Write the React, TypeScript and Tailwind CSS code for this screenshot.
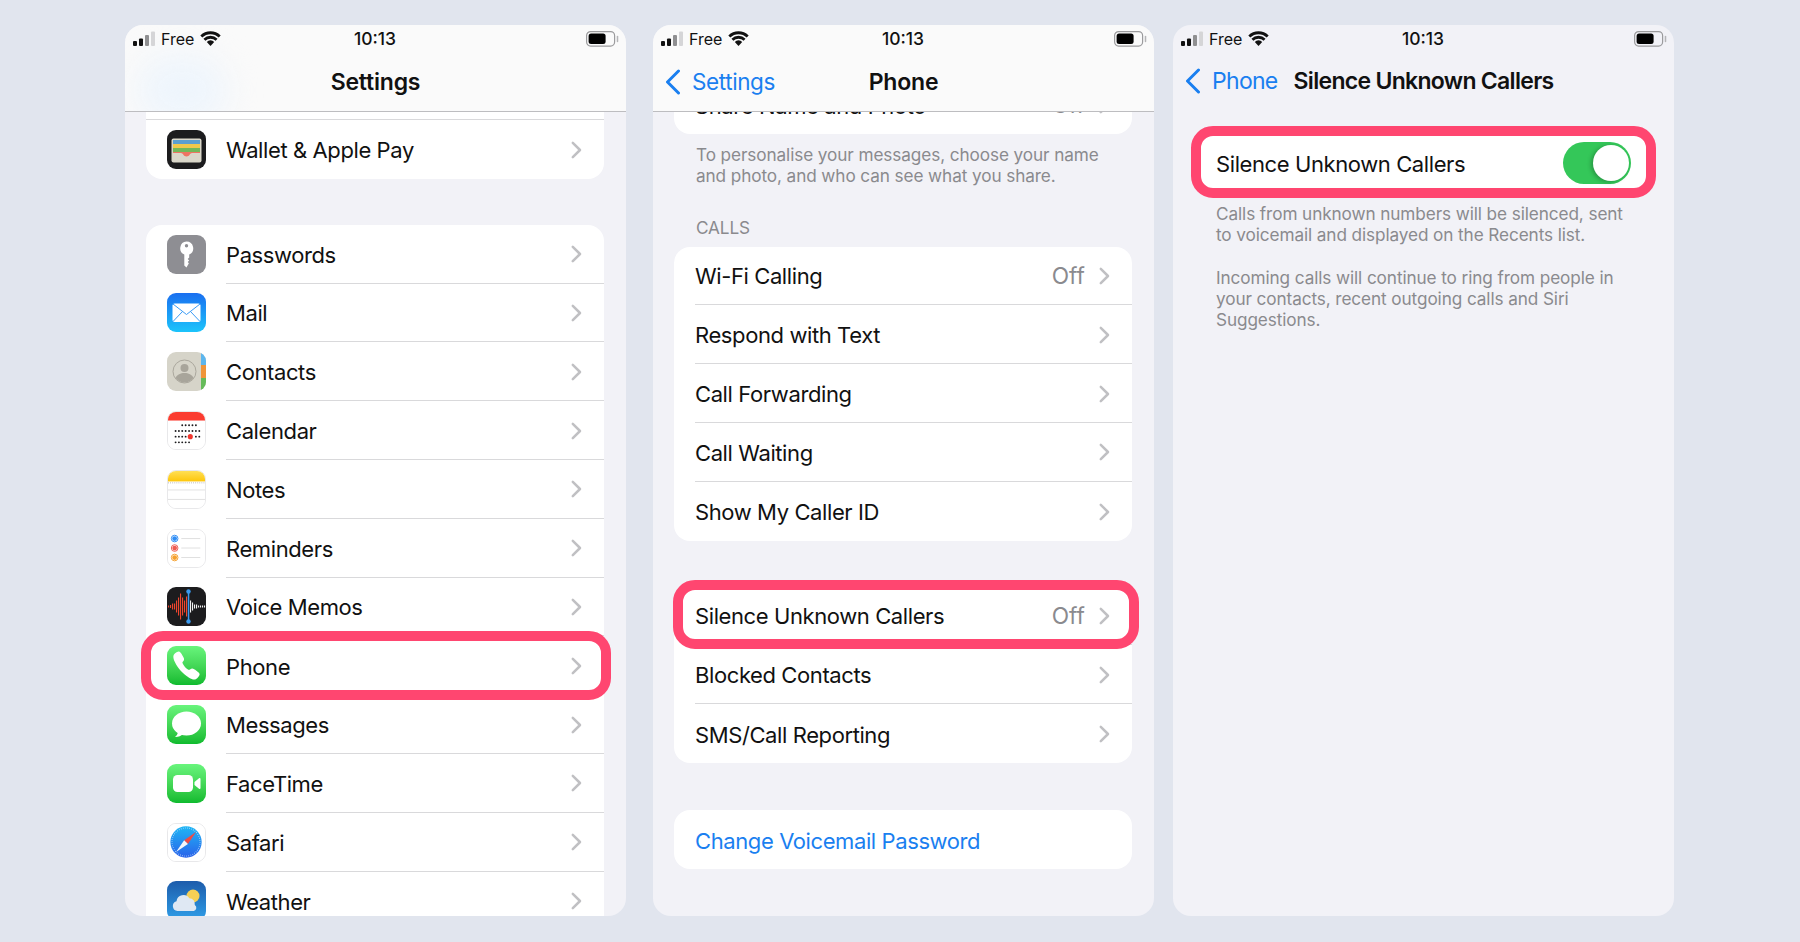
import type { ReactNode } from "react";
import { IoCall } from "react-icons/io5";

const Chevron = () => (
  <svg width="11" height="18" viewBox="0 0 11 18" className="mt-[1px] shrink-0">
    <path d="M1.8 1.8 9 9l-7.2 7.2" fill="none" stroke="#c0c0c3" strokeWidth="2.5" strokeLinecap="round" strokeLinejoin="round" />
  </svg>
);

const BackChevron = () => (
  <svg width="16" height="26" viewBox="0 0 16 26" className="shrink-0">
    <path d="M13.5 2 2.5 13l11 11" fill="none" stroke="#1a7ff0" strokeWidth="3" strokeLinecap="round" strokeLinejoin="round" />
  </svg>
);

const IconBox = ({ children, border }: { children: ReactNode; border?: boolean }) => (
  <div className={`h-[39px] w-[39px] shrink-0 overflow-hidden rounded-[9px] ${border ? "border border-[#e8e8ea]" : ""}`}>
    {children}
  </div>
);

const Svg = ({ children }: { children: ReactNode }) => (
  <svg viewBox="0 0 39 39" className="h-full w-full">{children}</svg>
);

const WalletIcon = () => (
  <IconBox>
    <Svg>
      <rect width="39" height="39" fill="#1c1c1e" />
      <rect x="4.5" y="8.5" width="30" height="24" rx="2" fill="#dad7ca" />
      <rect x="6" y="10" width="27" height="4" fill="#5b9fd0" />
      <rect x="6" y="14" width="27" height="4" fill="#f1c84b" />
      <rect x="6" y="18" width="27" height="4" fill="#72b85a" />
      <path d="M6 22h27v1h-8c-2 0-2.500 3.500-5.500 3.500S16 23 14 23H6z" fill="#ee7462" />
    </Svg>
  </IconBox>
);

const KeyIcon = () => (
  <IconBox>
    <Svg>
      <rect width="39" height="39" fill="#8e8e93" />
      <path fillRule="evenodd" fill="#fff" d="M19.500 6.500a6.800 6.800 0 0 1 2.700 13v3l-1.500 1.500 1.500 1.500-1.500 1.500 1.200 1.300-2.400 4.200-2.200-2V19.500a6.800 6.800 0 0 1 2.200-13zm0 2.600a1.700 1.700 0 1 0 0 3.400 1.700 1.700 0 0 0 0-3.400z" />
    </Svg>
  </IconBox>
);

const MailIcon = () => (
  <IconBox>
    <Svg>
      <defs>
        <linearGradient id="mailBg" x1="0" y1="0" x2="0" y2="1">
          <stop offset="0" stopColor="#1a6ff0" />
          <stop offset="1" stopColor="#1cc4fb" />
        </linearGradient>
      </defs>
      <rect width="39" height="39" fill="url(#mailBg)" />
      <rect x="5.500" y="10.500" width="28" height="18.500" rx="2" fill="#fff" />
      <path d="M6 11l13.500 10.500L33 11M6 28.500l9.500-10M33 28.500l-9.500-10" fill="none" stroke="#3b9bf5" strokeWidth="1" />
    </Svg>
  </IconBox>
);

const ContactsIcon = () => (
  <IconBox>
    <Svg>
      <rect width="39" height="39" fill="#d6d4c9" />
      <rect x="34" y="0" width="5" height="13" fill="#5cb6ee" />
      <rect x="34" y="13" width="5" height="13" fill="#f0953a" />
      <rect x="34" y="26" width="5" height="13" fill="#66bb5a" />
      <circle cx="17.500" cy="19.500" r="11.500" fill="none" stroke="#aaa79d" strokeWidth="1" />
      <circle cx="17.500" cy="16" r="4" fill="#a8a59b" />
      <path d="M8.500 26c1.500-3.500 5-5 9-5s7.500 1.500 9 5c-2 2.700-5.300 4.500-9 4.500s-7-1.800-9-4.500z" fill="#a8a59b" />
    </Svg>
  </IconBox>
);

const calendarDots = [
  [15, 14], [18.600, 14], [22.200, 14], [25.800, 14], [29.400, 14],
  [8, 20], [11.500, 20], [15, 20], [18.600, 20], [22.200, 20], [25.800, 20], [29.400, 20], [33, 20],
  [8, 26], [11.500, 26], [15, 26], [18.600, 26], [29.400, 26], [33, 26],
  [8, 32], [11.500, 32], [15, 32], [18.600, 32], [22.200, 32],
];

const CalendarIcon = () => (
  <IconBox border>
    <Svg>
      <rect width="39" height="39" fill="#fff" />
      <rect width="39" height="9" fill="#fb3c30" />
      {calendarDots.map(([cx, cy], i) => (
        <circle key={i} cx={cx} cy={cy} r="1" fill="#1c1c1e" />
      ))}
      <circle cx="23.500" cy="26" r="2.700" fill="#f2382f" />
    </Svg>
  </IconBox>
);

const NotesIcon = () => (
  <IconBox border>
    <Svg>
      <defs>
        <linearGradient id="notesBg" x1="0" y1="0" x2="0" y2="1">
          <stop offset="0" stopColor="#ffdf55" />
          <stop offset="1" stopColor="#fdc60b" />
        </linearGradient>
      </defs>
      <rect width="39" height="39" fill="#fff" />
      <rect width="39" height="11" fill="url(#notesBg)" />
      <path d="M0 12.500h39" stroke="#b5b5b5" strokeWidth="1" strokeDasharray="1 1.200" />
      <path d="M0 20h39M0 30h39" stroke="#e0e0e0" strokeWidth="1" />
    </Svg>
  </IconBox>
);

const RemindersIcon = () => (
  <IconBox border>
    <Svg>
      <rect width="39" height="39" fill="#fff" />
      {[
        [9, "#2f8df5"],
        [19, "#ee5b52"],
        [29, "#f5a02c"],
      ].map(([y, color]) => (
        <g key={y}>
          <circle cx="7" cy={y} r="3.500" fill="#fff" stroke={color as string} strokeWidth="1" />
          <circle cx="7" cy={y} r="2.500" fill={color as string} />
          <path d={`M14 ${y}h20`} stroke="#dedede" strokeWidth="1" />
        </g>
      ))}
    </Svg>
  </IconBox>
);

const redBars = [[1, 1], [3, 1.500], [5, 3], [7, 3], [9, 6], [11, 9], [13, 13], [15, 9], [17, 6], [19, 10]];
const whiteBars = [[23, 6], [25, 4], [27, 2], [29, 2], [31, 1], [33, 1], [35, 1], [37, 1]];

const VoiceMemosIcon = () => (
  <IconBox>
    <Svg>
      <rect width="39" height="39" fill="#1c1c1e" />
      {redBars.map(([x, h]) => (
        <rect key={x} x={x} y={19.500 - h} width="1.100" height={h * 2} fill="#f0452f" />
      ))}
      {whiteBars.map(([x, h]) => (
        <rect key={x} x={x} y={19.500 - h} width="1.100" height={h * 2} fill="#f2f2f2" />
      ))}
      <rect x="20.800" y="4" width="1.500" height="31" fill="#3a9af0" />
      <circle cx="21.500" cy="4.500" r="2.200" fill="#3a9af0" />
      <circle cx="21.500" cy="34.500" r="2.200" fill="#3a9af0" />
    </Svg>
  </IconBox>
);

const greenBg = "bg-gradient-to-b from-[#68f57c] to-[#0dbb2e]";

const PhoneIcon = () => (
  <div className={`flex h-[39px] w-[39px] shrink-0 items-center justify-center rounded-[9px] ${greenBg}`}>
    <IoCall className="h-[31px] w-[31px] rotate-[3deg] text-white" />
  </div>
);

const MessagesIcon = () => (
  <IconBox>
    <div className={`h-full w-full ${greenBg}`}>
      <Svg>
        <ellipse cx="19.500" cy="18.500" rx="14.500" ry="12" fill="#fff" />
        <path d="M11 26c0 3-1.500 5-3 6 3 .2 6-1 8-3z" fill="#fff" />
      </Svg>
    </div>
  </IconBox>
);

const FaceTimeIcon = () => (
  <IconBox>
    <div className={`h-full w-full ${greenBg}`}>
      <Svg>
        <rect x="6" y="11" width="20" height="17" rx="4.500" fill="#fff" />
        <path d="M27.500 18l4.500-3.700c.8-.6 1.500-.2 1.500.7v9c0 .9-.7 1.300-1.500.7l-4.500-3.700z" fill="#fff" />
      </Svg>
    </div>
  </IconBox>
);

const SafariIcon = () => (
  <IconBox border>
    <Svg>
      <defs>
        <linearGradient id="safariBg" x1="0" y1="0" x2="0" y2="1">
          <stop offset="0" stopColor="#1fb6f5" />
          <stop offset="1" stopColor="#2a62ea" />
        </linearGradient>
      </defs>
      <rect width="39" height="39" fill="#fff" />
      <circle cx="19" cy="19" r="16.500" fill="url(#safariBg)" />
      <circle cx="19" cy="19" r="14.800" fill="none" stroke="#cfe6fb" strokeWidth="1.200" strokeDasharray="0.600 1.600" />
      <path d="M29.500 8.500 21 21l-4-4z" fill="#ee4b45" />
      <path d="M8.500 29.500 17 17l4 4z" fill="#f4f6fa" />
    </Svg>
  </IconBox>
);

const WeatherIcon = () => (
  <IconBox>
    <Svg>
      <defs>
        <linearGradient id="weatherBg" x1="0" y1="0" x2="0" y2="1">
          <stop offset="0" stopColor="#1d5cab" />
          <stop offset="1" stopColor="#2f9ee8" />
        </linearGradient>
      </defs>
      <rect width="39" height="39" fill="url(#weatherBg)" />
      <circle cx="26" cy="15" r="6.500" fill="#f5cf55" />
      <path d="M10.500 30a5 5 0 0 1-1-9.800 7 7 0 0 1 12.800-3 5.700 5.700 0 0 1 5.500 6.800 3.300 3.300 0 0 1-1 6z" fill="#dfe8f3" />
    </Svg>
  </IconBox>
);

const StatusBar = ({ tight }: { tight?: boolean }) => (
  <div className={`grid grid-cols-[1fr_auto_1fr] items-center pl-[8px] pr-[7px] ${tight ? "h-[27px]" : "h-[28px]"} text-[#111]`}>
    <div className="flex items-center">
      <svg width="23" height="16" viewBox="0 0 23 16" className="shrink-0">
        <rect x="0" y="10" width="4" height="5" rx="1" fill="#111" />
        <rect x="6" y="7.500" width="4" height="7.500" rx="1" fill="#111" />
        <rect x="12" y="4" width="4" height="11" rx="1" fill="#8f8f91" />
        <rect x="18" y="0.500" width="4" height="14.500" rx="1" fill="#d5d5d7" />
      </svg>
      <span className="ml-[5px] text-[16px] leading-none">Free</span>
      <svg width="21" height="16" viewBox="0 0 21 16" className="ml-[6px] shrink-0">
        <path d="M1.300 5.500a13.200 13.200 0 0 1 18.400 0M4.400 8.700a8.800 8.800 0 0 1 12.200 0" fill="none" stroke="#111" strokeWidth="2.800" />
        <path d="M6.800 10.900a5 5 0 0 1 7.400 0L10.500 15z" fill="#111" />
      </svg>
    </div>
    <div className="-ml-[2px] text-[17.500px] font-medium leading-none">10:13</div>
    <div className="flex justify-end">
      <svg width="33" height="16" viewBox="0 0 33 16" className="shrink-0">
        <rect x="0.600" y="0.600" width="28" height="14.500" rx="4" fill="none" stroke="#9b9b9d" strokeWidth="1.200" />
        <rect x="2.600" y="2.600" width="17" height="10.500" rx="2.500" fill="#000" />
        <path d="M31.500 5.500v5" stroke="#b5b5b7" strokeWidth="1.500" strokeLinecap="round" />
      </svg>
    </div>
  </div>
);

const Header = ({ back, title, plain }: { back?: string; title: string; plain?: boolean }) => (
  <div className={`relative z-10 h-[87px] shrink-0 overflow-hidden ${plain ? "" : "border-b border-[#bdbdc0] bg-[#fafafa]"}`}>
    {!back && !plain && (
      <div className="absolute left-[12px] top-[30px] h-[70px] w-[90px] rounded-full bg-[#eef5fc] blur-[16px]" />
    )}
    <div className="relative">
      <StatusBar tight={plain} />
      {plain ? (
        <div className="mt-[15px] flex h-[28px] items-center pl-[12px]">
          <BackChevron />
          <span className="ml-[11px] text-[23px] leading-none tracking-[-0.7px] text-[#1a7ff0]">{back}</span>
          <span className="ml-[16px] text-[23px] font-semibold leading-none tracking-[-0.7px] text-[#111]">{title}</span>
        </div>
      ) : (
        <div className="mt-[15px] grid h-[28px] grid-cols-[1fr_auto_1fr] items-center">
          <div className="flex items-center pl-[12px]">
            {back && (
              <>
                <BackChevron />
                <span className="ml-[11px] text-[22.500px] leading-none tracking-[-0.4px] text-[#1a7ff0]">{back}</span>
              </>
            )}
          </div>
          <span className="text-[23px] font-semibold leading-none tracking-[-0.2px] text-[#111]">{title}</span>
          <div />
        </div>
      )}
    </div>
  </div>
);

const Row = ({
  icon,
  label,
  value,
  last,
  highlight,
}: {
  icon?: ReactNode;
  label: string;
  value?: string;
  last?: boolean;
  highlight?: string;
}) => (
  <div className="relative flex h-[58.8px] shrink-0 items-center pl-[21px]">
    {icon && <div className="mr-[20px]">{icon}</div>}
    <div className={`flex h-full flex-1 items-center pr-[22px] ${last ? "" : "border-b border-[#d9d9db]"}`}>
      <span className="flex-1 pt-[2px] text-[22px] leading-none tracking-[-0.4px] text-[#111]">{label}</span>
      {value && <span className="mr-[14px] pt-[2px] text-[22.700px] leading-none text-[#8a8a8e]">{value}</span>}
      <Chevron />
    </div>
    {highlight && <div className={`absolute rounded-[22px] border-[10.500px] border-[#ff4670] ${highlight}`} />}
  </div>
);

const Card = ({ children, className = "" }: { children: ReactNode; className?: string }) => (
  <div className={`ml-[21px] w-[458px] overflow-hidden bg-white ${className}`}>{children}</div>
);

const Foot = ({ children, className = "" }: { children: ReactNode; className?: string }) => (
  <p className={`text-[17.200px] leading-[21.300px] tracking-[-0.1px] text-[#8a8a8e] ${className}`}>{children}</p>
);

const settingsRows = [
  { label: "Passwords", icon: <KeyIcon /> },
  { label: "Mail", icon: <MailIcon /> },
  { label: "Contacts", icon: <ContactsIcon /> },
  { label: "Calendar", icon: <CalendarIcon /> },
  { label: "Notes", icon: <NotesIcon /> },
  { label: "Reminders", icon: <RemindersIcon /> },
  { label: "Voice Memos", icon: <VoiceMemosIcon /> },
  { label: "Phone", icon: <PhoneIcon />, highlight: "-left-[5px] -right-[7px] -top-[5.500px] -bottom-[4.500px] z-10" },
  { label: "Messages", icon: <MessagesIcon /> },
  { label: "FaceTime", icon: <FaceTimeIcon /> },
  { label: "Safari", icon: <SafariIcon /> },
  { label: "Weather", icon: <WeatherIcon /> },
];

const callRows = ["Wi-Fi Calling", "Respond with Text", "Call Forwarding", "Call Waiting", "Show My Caller ID"];

const Panel = ({ children, className = "" }: { children: ReactNode; className?: string }) => (
  <div className={`flex h-[891px] w-[501px] shrink-0 flex-col overflow-hidden rounded-[18px] bg-[#f2f2f7] ${className}`}>
    {children}
  </div>
);

export default function App() {
  return (
    <div className="flex h-[942px] w-[1800px] overflow-hidden bg-[#e1e5ee] pl-[125px] pt-[25px] font-['Inter',sans-serif]">
      <Panel>
        <Header title="Settings" />
        <div className="min-h-0 flex-1">
          <Card className="rounded-b-[16px] pt-[7px]">
            <div className="border-t border-[#d9d9db]">
              <Row icon={<WalletIcon />} label="Wallet & Apple Pay" last />
            </div>
          </Card>
          <div className="ml-[21px] mt-[46px] w-[458px] rounded-t-[16px] bg-white">
            {settingsRows.map((row, i) => (
              <Row key={row.label} icon={row.icon} label={row.label} highlight={row.highlight} last={i === 7 || i === 11} />
            ))}
          </div>
        </div>
      </Panel>

      <Panel className="ml-[27px]">
        <Header back="Settings" title="Phone" />
        <div className="min-h-0 flex-1">
          <Card className="flex h-[22px] flex-col justify-end rounded-b-[16px]">
            <Row label="Share Name and Photo" value="Off" last />
          </Card>
          <Foot className="ml-[43px] mt-[10px]">
            To personalise your messages, choose your name
            <br />
            and photo, and who can see what you share.
          </Foot>
          <div className="ml-[43px] mt-[30px] text-[17.200px] leading-[21px] tracking-[-0.12px] text-[#8a8a8e]">CALLS</div>
          <Card className="mt-[9px] rounded-[16px]">
            {callRows.map((label, i) => (
              <Row key={label} label={label} value={i === 0 ? "Off" : undefined} last={i === 4} />
            ))}
          </Card>
          <div className="relative ml-[21px] mt-[46px] w-[458px] rounded-[16px] bg-white">
            <Row label="Silence Unknown Callers" value="Off" highlight="-left-[1px] -right-[7px] -top-[7px] -bottom-[4px] z-10" />
            <Row label="Blocked Contacts" />
            <Row label="SMS/Call Reporting" last />
          </div>
          <Card className="mt-[47.500px] flex h-[58.800px] items-center rounded-[16px] pl-[21px]">
            <span className="pt-[2px] text-[22px] leading-none tracking-[-0.4px] text-[#1a7ff0]">Change Voicemail Password</span>
          </Card>
        </div>
      </Panel>

      <Panel className="ml-[19px]">
        <Header back="Phone" title="Silence Unknown Callers" plain />
        <div className="min-h-0 flex-1">
          <div className="relative ml-[21px] mt-[22px] flex h-[58.8px] w-[458px] items-center rounded-[16px] bg-white pl-[22px] pr-[21px]">
            <span className="flex-1 pt-[2px] text-[22px] leading-none tracking-[-0.4px] text-[#111]">Silence Unknown Callers</span>
            <div className="relative z-20 flex h-[42px] w-[68px] items-center justify-end rounded-full bg-[#34c759] pr-[2px]">
              <div className="h-[36px] w-[36px] rounded-full bg-white shadow-[-2px_1px_4px_rgba(0,0,0,0.25)]" />
            </div>
            <div className="absolute -left-[3px] -right-[4px] -top-[8px] -bottom-[5px] rounded-[22px] border-[10.500px] border-[#ff4670]" />
          </div>
          <Foot className="ml-[43px] mt-[10px]">
            Calls from unknown numbers will be silenced, sent
            <br />
            to voicemail and displayed on the Recents list.
          </Foot>
          <Foot className="ml-[43px] mt-[21.300px]">
            Incoming calls will continue to ring from people in
            <br />
            your contacts, recent outgoing calls and Siri
            <br />
            Suggestions.
          </Foot>
        </div>
      </Panel>
    </div>
  );
}
